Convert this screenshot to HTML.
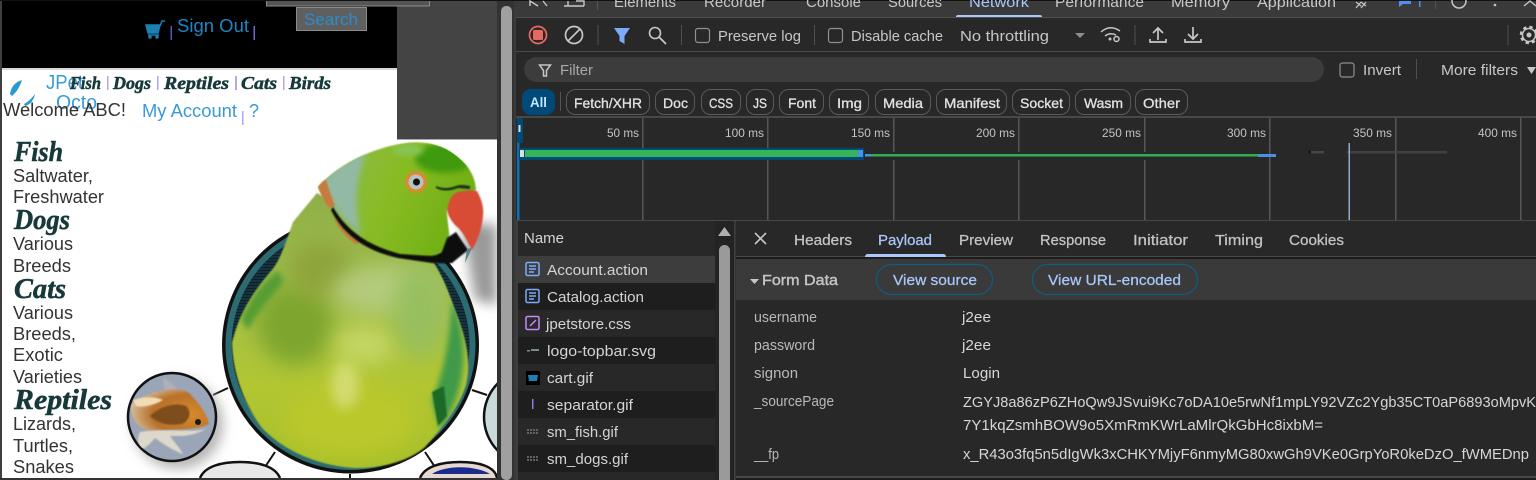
<!DOCTYPE html>
<html><head><meta charset="utf-8"><title>JPetStore DevTools</title>
<style>
html,body{margin:0;padding:0;background:#282828;width:1536px;height:480px;overflow:hidden}
svg{display:block;filter:blur(.3px)}
text{font-family:"Liberation Sans",sans-serif;white-space:pre}
.t{font-size:14.5px;fill:#c7c7c7}
.c{font-size:14px;fill:#e3e3e3;stroke:#e3e3e3;stroke-width:.3px}
.g{font-size:12px;fill:#c4c4c4}
.p{font-size:18px;fill:#333}
.h{font-family:"Liberation Serif",serif;font-weight:bold;font-style:italic;fill:#17393a;stroke:#17393a;stroke-width:.5px}
.k{font-size:14.5px;fill:#b9b9b9}
.v{font-size:14.5px;fill:#d6d6d6}
.n{font-size:14.5px;fill:#d4d4d4}
.d{font-size:14.5px;fill:#c4c4c4;stroke:#c4c4c4;stroke-width:.25px}
</style></head><body>
<svg width="1536" height="480" viewBox="0 0 1536 480" xmlns="http://www.w3.org/2000/svg">
<defs>
<filter id="b1"><feGaussianBlur stdDeviation=".7"/></filter>
<filter id="b3" x="-30%" y="-30%" width="160%" height="160%"><feGaussianBlur stdDeviation="3"/></filter>
<filter id="b6" x="-40%" y="-40%" width="180%" height="180%"><feGaussianBlur stdDeviation="6"/></filter>
<filter id="b10" x="-60%" y="-60%" width="220%" height="220%"><feGaussianBlur stdDeviation="10"/></filter>
<pattern id="st" width="3" height="3" patternUnits="userSpaceOnUse"><rect width="3" height="3" fill="#17333d"/><rect width="3" height="1" fill="#0d2029"/></pattern>
<linearGradient id="bd" x1="0" y1="0" x2="0" y2="1"><stop offset="0" stop-color="#8fae45"/><stop offset=".35" stop-color="#9fbd4c"/><stop offset=".7" stop-color="#b2c632"/><stop offset="1" stop-color="#a8c02a"/></linearGradient>
<linearGradient id="hd" x1="0" y1=".2" x2="1" y2=".5"><stop offset="0" stop-color="#8dbb55"/><stop offset=".5" stop-color="#88bb22"/><stop offset="1" stop-color="#6eae14"/></linearGradient>
<radialGradient id="fb" cx=".75" cy=".6" r=".8"><stop offset="0" stop-color="#d98a2a"/><stop offset=".6" stop-color="#b9702a"/><stop offset="1" stop-color="#d8c8a8"/></radialGradient>
<clipPath id="bc"><path d="M293 222C285 245 280 260 272 270C255 290 240 310 232 343C233 375 245 405 262 428C285 452 320 466 355 468C385 468 410 460 425 447C440 430 458 410 466 385C472 360 465 335 455 310C448 290 440 270 430 258L317 193Z"/></clipPath>
<clipPath id="hc"><path d="M318 187C335 168 365 150 400 144C420 140 440 143 455 155C468 165 475 175 476 190L447 210C447 225 452 240 448 248C440 258 425 258 405 256C380 252 355 240 340 222C330 210 323 198 318 187Z"/></clipPath>
<clipPath id="lp"><rect x="2" y="70" width="495" height="408"/></clipPath>
<clipPath id="fc"><circle cx="172" cy="417" r="43"/></clipPath>
</defs>

<!-- page frame -->
<rect width="1536" height="480" fill="#282828"/>
<rect x="0" y="0" width="500" height="480" fill="#3f3f3f"/>
<rect x="2" y="0" width="395" height="68" fill="#000"/>
<rect x="2" y="68" width="395" height="2" fill="#d8d8d8"/>
<rect x="2" y="70" width="395" height="70" fill="#fff"/>
<rect x="397" y="0" width="100" height="139" fill="#444"/>
<rect x="2" y="139" width="495" height="339" fill="#fff"/>
<rect x="397" y="139" width="100" height="1" fill="#aaa"/>

<!-- left header -->
<rect x="266.500" y="-2" width="163" height="8" fill="#555" stroke="#8b8b8b"/>
<rect x="296.500" y="7.500" width="70" height="23" fill="#5f5f5f" stroke="#8b8b8b"/>
<text x="304" y="25" font-size="17" fill="#2a8ccc" textLength="54" lengthAdjust="spacingAndGlyphs">Search</text>
<g fill="none" stroke="#1c7fb0" stroke-width="1.500">
<path d="M146 25H160L158 33H148Z" fill="#1c7fb0"/><path d="M160 26L162 21H165M148 35H159"/>
<circle cx="150" cy="37" r="1" fill="#1c7fb0"/><circle cx="157" cy="37" r="1" fill="#1c7fb0"/>
</g>
<rect x="170.500" y="26" width="1.500" height="14" fill="#5757b5"/>
<text x="177" y="32" font-size="18" fill="#1a87c4" textLength="72" lengthAdjust="spacingAndGlyphs">Sign Out</text>
<rect x="253.500" y="26" width="1.500" height="14" fill="#6a6ad0"/>

<!-- logo & nav -->
<path d="M10 94C11 87 15 82 22 80C20 86 17 92 12 96Z" fill="#2b9ad0"/>
<path d="M24 104C28 102 32 98 35 94C34 100 30 105 25 106Z" fill="#2b9ad0"/>
<text x="46" y="89" font-size="20" fill="#3a9bd8" textLength="37" lengthAdjust="spacingAndGlyphs">JPet</text>
<text x="56" y="109" font-size="20" fill="#3a9bd8" textLength="41" lengthAdjust="spacingAndGlyphs">Octo</text>
<text class="h" x="70" y="89" font-size="18" textLength="31" lengthAdjust="spacingAndGlyphs">Fish</text>
<text class="h" x="113" y="89" font-size="18" textLength="38" lengthAdjust="spacingAndGlyphs">Dogs</text>
<text class="h" x="164" y="89" font-size="18" textLength="65" lengthAdjust="spacingAndGlyphs">Reptiles</text>
<text class="h" x="241" y="89" font-size="18" textLength="36" lengthAdjust="spacingAndGlyphs">Cats</text>
<text class="h" x="289" y="89" font-size="18" textLength="42" lengthAdjust="spacingAndGlyphs">Birds</text>
<g fill="#aaaaf5"><rect x="107" y="76" width="1.500" height="14"/><rect x="157" y="76" width="1.500" height="14"/><rect x="235" y="76" width="2" height="14"/><rect x="283" y="76" width="1.500" height="14"/><rect x="242" y="111" width="1.500" height="14"/></g>
<text x="3" y="116" font-size="18" fill="#333" textLength="123" lengthAdjust="spacingAndGlyphs">Welcome ABC!</text>
<text x="142" y="117" font-size="18" fill="#3a9ad8" textLength="95" lengthAdjust="spacingAndGlyphs">My Account</text>
<text x="249" y="117" font-size="18" fill="#3a9ad8">?</text>

<!-- left list -->
<text class="h" x="14" y="161" font-size="28" textLength="49" lengthAdjust="spacingAndGlyphs">Fish</text>
<text class="p" x="13" y="182" textLength="80" lengthAdjust="spacingAndGlyphs">Saltwater,</text>
<text class="p" x="13" y="203" textLength="91" lengthAdjust="spacingAndGlyphs">Freshwater</text>
<text class="h" x="14" y="229" font-size="28" textLength="56" lengthAdjust="spacingAndGlyphs">Dogs</text>
<text class="p" x="13" y="250" textLength="60" lengthAdjust="spacingAndGlyphs">Various</text>
<text class="p" x="13" y="272" textLength="58" lengthAdjust="spacingAndGlyphs">Breeds</text>
<text class="h" x="14" y="298" font-size="28" textLength="52" lengthAdjust="spacingAndGlyphs">Cats</text>
<text class="p" x="13" y="319" textLength="60" lengthAdjust="spacingAndGlyphs">Various</text>
<text class="p" x="13" y="340" textLength="63" lengthAdjust="spacingAndGlyphs">Breeds,</text>
<text class="p" x="13" y="361" textLength="50" lengthAdjust="spacingAndGlyphs">Exotic</text>
<text class="p" x="13" y="383" textLength="69" lengthAdjust="spacingAndGlyphs">Varieties</text>
<text class="h" x="14" y="409" font-size="28" textLength="98" lengthAdjust="spacingAndGlyphs">Reptiles</text>
<text class="p" x="13" y="430" textLength="63" lengthAdjust="spacingAndGlyphs">Lizards,</text>
<text class="p" x="13" y="452" textLength="60" lengthAdjust="spacingAndGlyphs">Turtles,</text>
<text class="p" x="13" y="473" textLength="61" lengthAdjust="spacingAndGlyphs">Snakes</text>

<!-- illustration -->
<g clip-path="url(#lp)">
<path d="M462 222L497 225L497 305L475 300Z" fill="#9a9a9a" filter="url(#b6)"/>
<g stroke="#111" stroke-width="2" fill="none">
<path d="M213 395L228 388M472 390L487 395M275 452L265 467M425 452L435 467M350 474V478"/>
</g>
<circle cx="178" cy="424" r="45" fill="#b5b5b5" filter="url(#b6)"/>
<circle cx="172" cy="417" r="44" fill="#9aa5b8" stroke="#111" stroke-width="2.500"/>
<g clip-path="url(#fc)">
<path d="M163 378C170 380 177 388 180 394L165 394Z" fill="#aeb0b8" filter="url(#b1)"/>
<path d="M131 405C145 392 175 385 188 392C198 402 207 413 209 424C196 431 170 429 150 431C138 428 130 418 131 405Z" fill="url(#fb)" filter="url(#b1)"/>
<path d="M133 400C142 397 155 396 163 400C155 405 142 408 136 406Z" fill="#f0dcb5" filter="url(#b1)"/>
<path d="M150 416C160 406 175 402 186 406C192 412 190 420 182 424C170 426 158 424 150 416Z" fill="#7d4d1e" filter="url(#b1)"/>
<path d="M140 432C160 428 190 433 206 429C192 437 180 436 170 436C174 442 180 448 183 454C172 450 160 442 155 438C150 444 146 448 140 450C138 444 137 438 140 432Z" fill="#dcd8cc" filter="url(#b1)"/>
<circle cx="198" cy="422" r="3" fill="#1a1a1a"/>
</g>
<circle cx="532" cy="417" r="48" fill="#c9dadb" stroke="#111" stroke-width="2.500"/>
<path d="M200 478C205 466 222 462 240 462C258 462 275 466 280 478" fill="#e8e8e8" stroke="#111" stroke-width="2.500"/>
<path d="M420 478C425 466 442 462 460 462C478 462 495 466 497 478" fill="#e5d8d0" stroke="#111" stroke-width="2.500"/>
<path d="M432 474C445 465 475 465 490 474Z" fill="#1c2c8c"/>
<circle cx="350.500" cy="345" r="128.500" fill="#111"/>
<circle cx="350.500" cy="345" r="125" fill="#2c6b71"/>
<circle cx="350.500" cy="345" r="119" fill="url(#st)"/>
<!-- body -->
<path d="M293 222C285 245 280 260 272 270C255 290 240 310 232 343C233 375 245 405 262 428C285 452 320 466 355 468C385 468 410 460 425 447C440 430 458 410 466 385C472 360 465 335 455 310C448 290 440 270 430 258L317 193Z" fill="url(#bd)" filter="url(#b1)"/>
<g clip-path="url(#bc)">
<ellipse cx="295" cy="325" rx="38" ry="40" fill="#7ea62e" filter="url(#b10)"/>
<ellipse cx="320" cy="270" rx="32" ry="28" fill="#8ea43a" filter="url(#b10)"/>
<ellipse cx="385" cy="290" rx="52" ry="24" fill="#b4cb7c" filter="url(#b10)"/>
<ellipse cx="365" cy="345" rx="30" ry="20" fill="#c4d664" filter="url(#b10)"/>
<ellipse cx="350" cy="420" rx="65" ry="36" fill="#bac82a" filter="url(#b10)"/>
<ellipse cx="345" cy="385" rx="14" ry="24" fill="#d2dc70" filter="url(#b6)"/>
<ellipse cx="420" cy="310" rx="26" ry="46" fill="#98bf5e" filter="url(#b10)"/>
<path d="M241 320C250 298 262 284 278 270L284 282C270 298 256 315 248 330Z" fill="#569c30" filter="url(#b3)"/>
<path d="M452 300C468 340 470 385 440 430L432 400C445 370 450 335 452 300Z" fill="#3f9a4a" filter="url(#b3)"/>
<path d="M432 392L444 386L447 416L438 426Z" fill="#1d6b28" filter="url(#b1)"/>
</g>
<!-- head -->
<path d="M318 187C335 168 365 150 400 144C420 140 440 143 455 155C468 165 475 175 476 190L447 210C447 225 452 240 448 248C440 258 425 258 405 256C380 252 355 240 340 222C330 210 323 198 318 187Z" fill="url(#hd)" filter="url(#b1)"/>
<g clip-path="url(#hc)">
<path d="M322 182C336 168 350 159 366 153C358 172 352 205 362 236C346 223 330 205 322 182Z" fill="#92b9a4" filter="url(#b3)"/>
<ellipse cx="445" cy="158" rx="30" ry="15" fill="#3f9a08" filter="url(#b3)"/>
<ellipse cx="408" cy="150" rx="16" ry="6" fill="#86c454" filter="url(#b3)"/>
</g>
<path d="M318 187C322 182 324 180 326 180C329 190 332 198 335 206L329 208C325 202 321 195 318 187ZM333 216C342 227 350 236 360 243L356 244C346 238 338 228 333 216Z" fill="#c8793e" filter="url(#b1)"/>
<path d="M333 207C345 228 365 245 400 254L430 256C440 256 446 250 452 243L458 246L452 262L432 263L398 258C362 250 342 232 331 210Z" fill="#0a0a0a" filter="url(#b1)"/>
<path d="M447 238L456 232L468 250L452 263L438 263Z" fill="#0a0a0a" filter="url(#b1)"/>
<path d="M447 210C449 200 452 194 458 192C466 190 473 190 477 191C482 200 484 208 483 216C482 228 478 240 472 250C468 242 462 230 456 226C452 222 448 216 447 210Z" fill="#d84c36" filter="url(#b1)"/>
<path d="M467 249L472 248L465 263Z" fill="#5b7f8a"/>
<path d="M436 186Q445 190 456 186Q460 184 470 186L470 189L458 188Q445 193 436 188Z" fill="#14301a" filter="url(#b1)"/>
<circle cx="416" cy="182" r="11" fill="#d98a2e" filter="url(#b1)"/>
<circle cx="416" cy="182" r="7.500" fill="#b9c2c2"/>
<circle cx="416.500" cy="182" r="3.500" fill="#101010"/>
</g>
<rect x="0" y="478" width="500" height="2" fill="#333"/>

<!-- gutter -->
<rect x="497" y="0" width="19" height="480" fill="#333"/>
<rect x="501" y="6" width="11" height="474" rx="5" fill="#a0a0a0"/>
<rect x="514" y="0" width="2" height="480" fill="#3a3a3a"/>
<rect x="0" y="0" width="1536" height="1" fill="#111"/>

<!-- tabs -->
<rect x="516" y="1" width="1020" height="16" fill="#3a3a3a"/>
<rect x="516" y="17" width="1020" height="1" fill="#505050"/>
<g stroke="#c7c7c7" stroke-width="1.400" fill="none">
<path d="M530 6V1L538 6M543 1L547 6"/>
<path d="M564 6H584M568 1V6M576 1H584V6"/>
</g>
<rect x="597" y="1" width="1" height="9" fill="#555"/>
<text class="t" x="614" y="7" textLength="62" lengthAdjust="spacingAndGlyphs">Elements</text>
<text class="t" x="704" y="7" textLength="62" lengthAdjust="spacingAndGlyphs">Recorder</text>
<text class="t" x="806" y="7" textLength="55" lengthAdjust="spacingAndGlyphs">Console</text>
<text class="t" x="888" y="7" textLength="54" lengthAdjust="spacingAndGlyphs">Sources</text>
<text class="t" x="969" y="7" textLength="60" lengthAdjust="spacingAndGlyphs" style="fill:#a8c7fa">Network</text>
<text class="t" x="1055" y="7" textLength="89" lengthAdjust="spacingAndGlyphs">Performance</text>
<text class="t" x="1171" y="7" textLength="59" lengthAdjust="spacingAndGlyphs">Memory</text>
<text class="t" x="1257" y="7" textLength="79" lengthAdjust="spacingAndGlyphs">Application</text>
<path d="M956 17Q956 15 958 15H1040Q1042 15 1042 17Z" fill="#a8c7fa"/>
<path d="M1356 2L1361 6M1361 2L1366 6M1366 2L1361 8M1361 2L1356 8" stroke="#c7c7c7" stroke-width="1.200" fill="none"/>
<path d="M1399 1H1411V4H1403L1399 7Z" fill="#4f8fef"/>
<rect x="1419" y="1" width="1.500" height="6" fill="#4f8fef"/>
<rect x="1435" y="1" width="1" height="8" fill="#555"/>
<circle cx="1459" cy="1" r="7" fill="none" stroke="#c7c7c7" stroke-width="1.500"/>
<circle cx="1495" cy="5" r="1.300" fill="#c7c7c7"/>
<path d="M1524 6L1530 1L1536 6" stroke="#c7c7c7" stroke-width="1.400" fill="none"/>

<!-- toolbar -->
<rect x="516" y="18" width="1020" height="33" fill="#282828"/>
<rect x="516" y="51" width="1020" height="1" fill="#4a4a4a"/>
<circle cx="538" cy="35" r="8.500" fill="none" stroke="#e46962" stroke-width="1.700"/>
<rect x="533" y="30" width="10" height="10" rx="1.500" fill="#e46962"/>
<circle cx="574" cy="35" r="8.500" fill="none" stroke="#c7c7c7" stroke-width="1.700"/>
<path d="M568 41L580 29" stroke="#c7c7c7" stroke-width="1.700"/>
<rect x="597.500" y="25" width="1" height="20" fill="#4f4f4f"/>
<path d="M614 28H630L624.500 36V44L619.500 41V36Z" fill="#7cacf8"/>
<circle cx="655" cy="33" r="5.500" fill="none" stroke="#c7c7c7" stroke-width="1.600"/>
<path d="M659 37L666 44" stroke="#c7c7c7" stroke-width="1.800"/>
<rect x="681" y="25" width="1" height="20" fill="#4f4f4f"/>
<rect x="695.500" y="28.500" width="14" height="14" rx="2.500" fill="none" stroke="#8f8f8f" stroke-width="1.200"/>
<text class="t" x="718" y="41" textLength="83" lengthAdjust="spacingAndGlyphs">Preserve log</text>
<rect x="814" y="25" width="1" height="20" fill="#4f4f4f"/>
<rect x="828.500" y="28.500" width="14" height="14" rx="2.500" fill="none" stroke="#8f8f8f" stroke-width="1.200"/>
<text class="t" x="851" y="41" textLength="92" lengthAdjust="spacingAndGlyphs">Disable cache</text>
<text class="t" x="960" y="41" textLength="89" lengthAdjust="spacingAndGlyphs">No throttling</text>
<path d="M1075 33H1085L1080 38Z" fill="#8f8f8f"/>
<g fill="none" stroke="#c7c7c7" stroke-width="1.500">
<path d="M1101 32Q1110 24 1120 31M1105 36Q1110 32 1116 35"/>
<circle cx="1116.500" cy="39" r="2.500"/>
</g>
<circle cx="1110" cy="39" r="1.500" fill="#c7c7c7"/>
<rect x="1134.500" y="25" width="1" height="20" fill="#4f4f4f"/>
<g fill="none" stroke="#c7c7c7" stroke-width="1.700">
<path d="M1158 40V28M1153 33L1158 28L1163 33M1150 39V42H1166V39"/>
<path d="M1193 27V39M1188 34L1193 39L1198 34M1185 39V42H1201V39"/>
</g>
<rect x="1507.500" y="25" width="1" height="20" fill="#4f4f4f"/>
<circle cx="1529" cy="35" r="2.500" fill="#c7c7c7"/>
<circle cx="1529" cy="35" r="6.500" fill="none" stroke="#c7c7c7" stroke-width="1.500"/>
<circle cx="1529" cy="35" r="8" fill="none" stroke="#c7c7c7" stroke-width="2.500" stroke-dasharray="3.300 3"/>

<!-- filter row -->
<rect x="516" y="52" width="1020" height="64" fill="#282828"/>
<rect x="524" y="57" width="800" height="25" rx="12.500" fill="#3c3c3c"/>
<path d="M539.500 65H550.500L546.500 70.500V76H543.500V70.500Z" fill="none" stroke="#c7c7c7" stroke-width="1.500"/>
<text class="t" x="560" y="75" textLength="33" lengthAdjust="spacingAndGlyphs" style="fill:#a9a9a9">Filter</text>
<rect x="1340" y="63" width="14" height="14" rx="2.500" fill="none" stroke="#8f8f8f" stroke-width="1.200"/>
<text class="t" x="1363" y="75" textLength="38" lengthAdjust="spacingAndGlyphs">Invert</text>
<rect x="1416" y="59" width="1" height="20" fill="#4f4f4f"/>
<text class="t" x="1441" y="75" textLength="77" lengthAdjust="spacingAndGlyphs">More filters</text>
<path d="M1527 67H1536L1531.500 74Z" fill="#c7c7c7"/>

<!-- chips -->
<rect x="522" y="89" width="33" height="26" rx="9" fill="#004a77"/>
<text x="530" y="107" font-size="14" fill="#c2e7ff" font-weight="bold" textLength="17" lengthAdjust="spacingAndGlyphs">All</text>
<rect x="560" y="92" width="1" height="19" fill="#555"/>
<g fill="none" stroke="#5a5a5a" stroke-width="1">
<rect x="566.500" y="89.500" width="83" height="25" rx="9"/>
<rect x="655.500" y="89.500" width="39" height="25" rx="9"/>
<rect x="701.500" y="89.500" width="39" height="25" rx="9"/>
<rect x="746.500" y="89.500" width="27" height="25" rx="9"/>
<rect x="779.500" y="89.500" width="44" height="25" rx="9"/>
<rect x="829.500" y="89.500" width="39" height="25" rx="9"/>
<rect x="875.500" y="89.500" width="55" height="25" rx="9"/>
<rect x="936.500" y="89.500" width="70" height="25" rx="9"/>
<rect x="1012.500" y="89.500" width="57" height="25" rx="9"/>
<rect x="1075.500" y="89.500" width="55" height="25" rx="9"/>
<rect x="1135.500" y="89.500" width="52" height="25" rx="9"/>
</g>
<text class="c" x="574" y="108" textLength="68" lengthAdjust="spacingAndGlyphs">Fetch/XHR</text>
<text class="c" x="663" y="108" textLength="25" lengthAdjust="spacingAndGlyphs">Doc</text>
<text class="c" x="709" y="108" textLength="24" lengthAdjust="spacingAndGlyphs">CSS</text>
<text class="c" x="753" y="108" textLength="14" lengthAdjust="spacingAndGlyphs">JS</text>
<text class="c" x="788" y="108" textLength="28" lengthAdjust="spacingAndGlyphs">Font</text>
<text class="c" x="837" y="108" textLength="25" lengthAdjust="spacingAndGlyphs">Img</text>
<text class="c" x="883" y="108" textLength="40" lengthAdjust="spacingAndGlyphs">Media</text>
<text class="c" x="944" y="108" textLength="56" lengthAdjust="spacingAndGlyphs">Manifest</text>
<text class="c" x="1020" y="108" textLength="43" lengthAdjust="spacingAndGlyphs">Socket</text>
<text class="c" x="1084" y="108" textLength="39" lengthAdjust="spacingAndGlyphs">Wasm</text>
<text class="c" x="1143" y="108" textLength="37" lengthAdjust="spacingAndGlyphs">Other</text>

<!-- timeline -->
<rect x="516" y="116" width="1020" height="2" fill="#484848"/>
<rect x="516" y="118" width="1020" height="102" fill="#282828"/>
<g fill="#565656">
<rect x="642" y="118" width="1.500" height="102"/><rect x="767" y="118" width="1.500" height="102"/><rect x="893" y="118" width="1.500" height="102"/><rect x="1018" y="118" width="1.500" height="102"/><rect x="1144" y="118" width="1.500" height="102"/><rect x="1269" y="118" width="1.500" height="102"/><rect x="1395" y="118" width="1.500" height="102"/><rect x="1520" y="118" width="1.500" height="102"/>
</g>
<g fill="#282828"><rect x="1018" y="152" width="2" height="8"/><rect x="1144" y="152" width="2" height="8"/><rect x="893" y="152" width="2" height="8"/></g>
<text class="g" x="607" y="137" textLength="32" lengthAdjust="spacingAndGlyphs">50 ms</text>
<text class="g" x="725" y="137" textLength="39" lengthAdjust="spacingAndGlyphs">100 ms</text>
<text class="g" x="851" y="137" textLength="39" lengthAdjust="spacingAndGlyphs">150 ms</text>
<text class="g" x="976" y="137" textLength="39" lengthAdjust="spacingAndGlyphs">200 ms</text>
<text class="g" x="1102" y="137" textLength="39" lengthAdjust="spacingAndGlyphs">250 ms</text>
<text class="g" x="1227" y="137" textLength="39" lengthAdjust="spacingAndGlyphs">300 ms</text>
<text class="g" x="1353" y="137" textLength="39" lengthAdjust="spacingAndGlyphs">350 ms</text>
<text class="g" x="1478" y="137" textLength="39" lengthAdjust="spacingAndGlyphs">400 ms</text>
<rect x="517" y="118" width="2.500" height="102" fill="#0b6fb0"/>
<rect x="517" y="118" width="6" height="25" rx="2" fill="#004a77"/>
<rect x="518.500" y="125" width="2" height="7" fill="#ddd"/>
<rect x="519" y="148" width="345" height="12" fill="#004a77"/>
<rect x="520" y="150" width="4" height="7" fill="#ddd"/>
<rect x="525" y="150" width="334" height="7" fill="#34b55a"/>
<rect x="858" y="150" width="5" height="7" fill="#4c8fe8"/>
<rect x="865" y="154" width="6" height="2.500" fill="#4c8fe8"/>
<rect x="871" y="154" width="387" height="2.500" fill="#2fae55"/>
<rect x="1258" y="154" width="18" height="3" fill="#4c8fe8"/>
<rect x="1308" y="150" width="3" height="4" fill="#1c1c1c"/>
<rect x="1311" y="151" width="13" height="2.500" fill="#464646"/>
<rect x="1347" y="151" width="100" height="2.500" fill="#414141"/>
<rect x="1348.500" y="143" width="1.500" height="77" fill="#8fa9cf"/>

<!-- lower panels -->
<rect x="516" y="220" width="1020" height="1.500" fill="#464646"/>
<rect x="516" y="221" width="2" height="259" fill="#3e3e3e"/>
<rect x="518" y="221" width="217" height="259" fill="#232323"/>
<rect x="518" y="221" width="197" height="35" fill="#282828"/>
<rect x="734" y="221" width="1.500" height="259" fill="#3f3f3f"/>
<text class="n" x="524" y="243" textLength="40" lengthAdjust="spacingAndGlyphs">Name</text>
<rect x="518" y="256" width="197" height="27" fill="#3d3d3d"/>
<rect x="518" y="283" width="197" height="27" fill="#1e1e1e"/>
<rect x="518" y="310" width="197" height="27" fill="#282828"/>
<rect x="518" y="337" width="197" height="27" fill="#1e1e1e"/>
<rect x="518" y="364" width="197" height="27" fill="#282828"/>
<rect x="518" y="391" width="197" height="27" fill="#1e1e1e"/>
<rect x="518" y="418" width="197" height="27" fill="#282828"/>
<rect x="518" y="445" width="197" height="27" fill="#1e1e1e"/>
<rect x="518" y="472" width="197" height="8" fill="#282828"/>
<path d="M718 236L724.500 227L731 236Z" fill="#b0b0b0"/>
<path d="M719 480V250.500A5.500 5.500 0 0 1 730 250.500V480Z" fill="#9a9a9a"/>
<text class="n" x="547" y="275" textLength="101" lengthAdjust="spacingAndGlyphs">Account.action</text>
<text class="n" x="547" y="302" textLength="97" lengthAdjust="spacingAndGlyphs">Catalog.action</text>
<text class="n" x="546" y="329" textLength="85" lengthAdjust="spacingAndGlyphs">jpetstore.css</text>
<text class="n" x="547" y="356" textLength="109" lengthAdjust="spacingAndGlyphs">logo-topbar.svg</text>
<text class="n" x="547" y="383" textLength="46" lengthAdjust="spacingAndGlyphs">cart.gif</text>
<text class="n" x="547" y="410" textLength="86" lengthAdjust="spacingAndGlyphs">separator.gif</text>
<text class="n" x="547" y="437" textLength="71" lengthAdjust="spacingAndGlyphs">sm_fish.gif</text>
<text class="n" x="547" y="464" textLength="81" lengthAdjust="spacingAndGlyphs">sm_dogs.gif</text>
<g fill="none" stroke="#7cacf8" stroke-width="1.500">
<rect x="526" y="262.500" width="13" height="13" rx="1.500"/><path d="M529 266H536M529 269H536M529 272H534"/>
<rect x="526" y="289.500" width="13" height="13" rx="1.500"/><path d="M529 293H536M529 296H536M529 299H534"/>
</g>
<rect x="526" y="316.500" width="13" height="13" rx="1.500" fill="none" stroke="#c58af9" stroke-width="1.500"/>
<path d="M530 326L536 320" stroke="#c58af9" stroke-width="1.500"/>
<g fill="#7c8a8c"><rect x="527" y="350" width="3" height="1.500"/><rect x="531" y="349" width="8" height="2"/></g>
<rect x="526" y="371" width="14" height="14" fill="#000"/>
<path d="M528 375H538L537 381H529Z" fill="#1c7fb0"/>
<rect x="532" y="399" width="1.500" height="10" fill="#8a7fe0"/>
<path d="M527 430H539M527 433H539" stroke="#777" stroke-width="1.500" stroke-dasharray="2 1"/>
<path d="M527 457H539M527 460H539" stroke="#777" stroke-width="1.500" stroke-dasharray="2 1"/>

<!-- detail panel -->
<rect x="736" y="221" width="800" height="35" fill="#282828"/>
<rect x="736" y="256" width="800" height="1" fill="#4a4a4a"/>
<rect x="736" y="257" width="800" height="2" fill="#1c1c1c"/>
<rect x="736" y="259" width="800" height="41" fill="#3a3a3a"/>
<rect x="736" y="300" width="800" height="176" fill="#282828"/>
<rect x="736" y="476" width="800" height="2" fill="#484848"/>
<rect x="736" y="478" width="800" height="2" fill="#1c1c1c"/>
<path d="M755 233L766 244M766 233L755 244" stroke="#c7c7c7" stroke-width="1.600"/>
<text class="d" x="794" y="245" textLength="58" lengthAdjust="spacingAndGlyphs">Headers</text>
<text class="d" x="878" y="245" textLength="54" lengthAdjust="spacingAndGlyphs" style="fill:#a8c7fa;stroke:#a8c7fa">Payload</text>
<text class="d" x="959" y="245" textLength="54" lengthAdjust="spacingAndGlyphs">Preview</text>
<text class="d" x="1040" y="245" textLength="66" lengthAdjust="spacingAndGlyphs">Response</text>
<text class="d" x="1133" y="245" textLength="55" lengthAdjust="spacingAndGlyphs">Initiator</text>
<text class="d" x="1215" y="245" textLength="48" lengthAdjust="spacingAndGlyphs">Timing</text>
<text class="d" x="1289" y="245" textLength="55" lengthAdjust="spacingAndGlyphs">Cookies</text>
<path d="M865 257Q865 254 868 254H943Q946 254 946 257Z" fill="#a8c7fa"/>
<path d="M750 279H759L754.500 284Z" fill="#c7c7c7"/>
<text class="d" x="762" y="285" textLength="76" lengthAdjust="spacingAndGlyphs" style="stroke-width:.4px">Form Data</text>
<rect x="876.500" y="264.500" width="116" height="30" rx="15" fill="none" stroke="#0f5d85" stroke-width="1.200"/>
<text class="d" x="893" y="285" textLength="84" lengthAdjust="spacingAndGlyphs" style="fill:#a8c7fa;stroke:#a8c7fa">View source</text>
<rect x="1032.500" y="264.500" width="165" height="30" rx="15" fill="none" stroke="#0f5d85" stroke-width="1.200"/>
<text class="d" x="1048" y="285" textLength="133" lengthAdjust="spacingAndGlyphs" style="fill:#a8c7fa;stroke:#a8c7fa">View URL-encoded</text>
<text class="k" x="754" y="322" textLength="63" lengthAdjust="spacingAndGlyphs">username</text>
<text class="k" x="754" y="350" textLength="61" lengthAdjust="spacingAndGlyphs">password</text>
<text class="k" x="754" y="378" textLength="44" lengthAdjust="spacingAndGlyphs">signon</text>
<text class="k" x="754" y="406" textLength="80" lengthAdjust="spacingAndGlyphs">_sourcePage</text>
<text class="k" x="754" y="459" textLength="25" lengthAdjust="spacingAndGlyphs">__fp</text>
<text class="v" x="962" y="322" textLength="29" lengthAdjust="spacingAndGlyphs">j2ee</text>
<text class="v" x="962" y="350" textLength="29" lengthAdjust="spacingAndGlyphs">j2ee</text>
<text class="v" x="963" y="378" textLength="37" lengthAdjust="spacingAndGlyphs">Login</text>
<text class="v" x="963" y="407" textLength="573" lengthAdjust="spacingAndGlyphs">ZGYJ8a86zP6ZHoQw9JSvui9Kc7oDA10e5rwNf1mpLY92VZc2Ygb35CT0aP6893oMpvK</text>
<text class="v" x="963" y="430" textLength="360" lengthAdjust="spacingAndGlyphs">7Y1kqZsmhBOW9o5XmRmKWrLaMlrQkGbHc8ixbM=</text>
<text class="v" x="963" y="459" textLength="566" lengthAdjust="spacingAndGlyphs">x_R43o3fq5n5dIgWk3xCHKYMjyF6nmyMG80xwGh9VKe0GrpYoR0keDzO_fWMEDnp</text>
</svg>
</body></html>
